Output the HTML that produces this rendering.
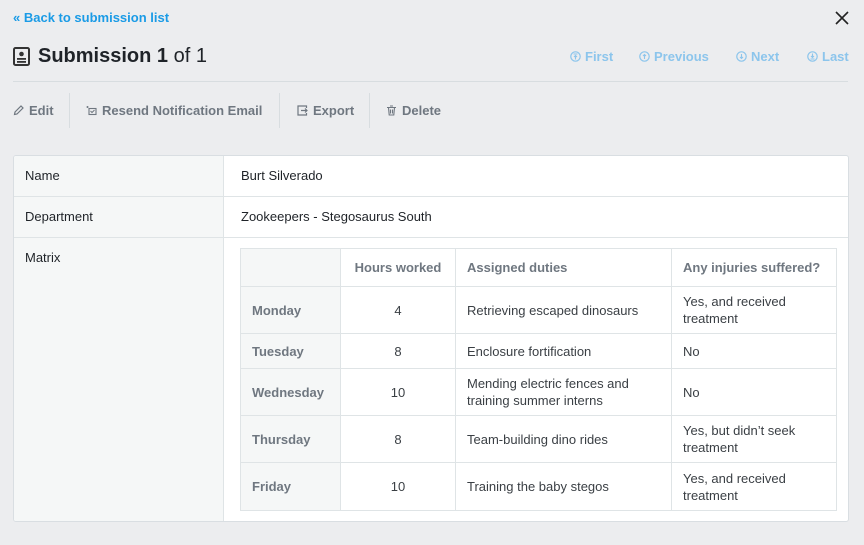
<!DOCTYPE html>
<html><head><style>
*{box-sizing:border-box;margin:0;padding:0}
body{width:864px;height:545px;background:#ecedef;font-family:"Liberation Sans",sans-serif;color:#1f2328;position:relative;overflow:hidden}
.a{position:absolute}
.back{left:13px;top:10px;color:#1a9be6;font-weight:bold;font-size:13px}
.title{left:13px;top:45px;font-size:20px;display:flex;align-items:center}
.title b{margin-left:8px}
.nav{top:49px;color:#8cc5ec;font-weight:bold;font-size:13px;display:flex;align-items:center}
.nav svg{margin-right:4px}
.hr{left:13px;top:81px;width:835px;height:1px;background:#d8dde0}
.tb{top:92px;height:36px;display:flex;align-items:center;color:#6f7780;font-weight:bold;font-size:13px}
.tb svg{margin-right:5px}
.sep{top:93px;width:1px;height:35px;background:#d8dde0}
.card{left:13px;top:155px;width:836px;height:367px;background:#fff;border:1px solid #d9dee2;border-radius:3px;overflow:hidden}
.lab{position:absolute;left:0;width:210px;background:#f5f7f7;border-right:1px solid #dfe4e6;border-bottom:1px solid #dfe4e6;font-size:13px;padding:12px 11px}
.row{position:absolute;left:0;width:836px;border-bottom:1px solid #dfe4e6}
.val{position:absolute;left:227px;font-size:13px}
table{position:absolute;left:226px;top:92px;width:597px;border-collapse:collapse;font-size:13px;color:#3a3f44}
td,th{border:1px solid #dfe4e6;padding:0 11px;text-align:left;line-height:17px}
th{color:#6f7780;font-weight:bold;height:38px}
td.d{background:#f5f7f7;color:#6f7780;font-weight:bold}
td.n{text-align:center}
</style></head><body>
<div class="a back">« Back to submission list</div>
<svg class="a" style="left:835px;top:11px" width="14" height="14" viewBox="0 0 14 14"><path d="M1 1L13 13M13 1L1 13" stroke="#222" stroke-width="1.6"/></svg>
<div class="a title"><svg width="17" height="19" viewBox="0 0 17 19"><rect x="1" y="1" width="15" height="17" rx="1.5" fill="none" stroke="#333" stroke-width="2"/><circle cx="8.5" cy="7" r="2.3" fill="#333"/><rect x="4" y="11" width="9" height="1.8" fill="#333"/><rect x="4" y="14" width="9" height="1.8" fill="#333"/></svg><b>Submission 1</b>&nbsp;of 1</div>
<div class="a nav" style="left:570px"><svg width="11" height="11" viewBox="0 0 11 11"><circle cx="5.5" cy="5.5" r="4.7" fill="none" stroke="#8cc5ec" stroke-width="1.2"/><path d="M3.5 3h4M5.5 8.5V4.5M4 6l1.5-1.5L7 6" fill="none" stroke="#8cc5ec" stroke-width="1.1"/></svg>First</div>
<div class="a nav" style="left:639px"><svg width="11" height="11" viewBox="0 0 11 11"><circle cx="5.5" cy="5.5" r="4.7" fill="none" stroke="#8cc5ec" stroke-width="1.2"/><path d="M5.5 8V3.5M4 5l1.5-1.5L7 5" fill="none" stroke="#8cc5ec" stroke-width="1.1"/></svg>Previous</div>
<div class="a nav" style="left:736px"><svg width="11" height="11" viewBox="0 0 11 11"><circle cx="5.5" cy="5.5" r="4.7" fill="none" stroke="#8cc5ec" stroke-width="1.2"/><path d="M5.5 3v4.5M4 6l1.5 1.5L7 6" fill="none" stroke="#8cc5ec" stroke-width="1.1"/></svg>Next</div>
<div class="a nav" style="left:807px"><svg width="11" height="11" viewBox="0 0 11 11"><circle cx="5.5" cy="5.5" r="4.7" fill="none" stroke="#8cc5ec" stroke-width="1.2"/><path d="M3.5 8h4M5.5 2.5v4M4 5l1.5 1.5L7 5" fill="none" stroke="#8cc5ec" stroke-width="1.1"/></svg>Last</div>
<div class="a hr"></div>
<div class="a tb" style="left:13px"><svg width="11" height="11" viewBox="0 0 11 11"><path d="M1.5 9.5l.5-2.5 6-6 2 2-6 6z" fill="none" stroke="#6f7780" stroke-width="1.2"/></svg>Edit</div>
<div class="a sep" style="left:69px"></div>
<div class="a tb" style="left:86px"><svg width="11" height="11" viewBox="0 0 11 11"><rect x="3" y="3.5" width="7" height="6" fill="none" stroke="#6f7780" stroke-width="1.1"/><path d="M4.5 6l1.5 1.5 2.5-2.5" fill="none" stroke="#6f7780" stroke-width="1"/><circle cx="1.5" cy="2" r="1" fill="#6f7780"/></svg>Resend Notification Email</div>
<div class="a sep" style="left:279px"></div>
<div class="a tb" style="left:297px"><svg width="11" height="11" viewBox="0 0 11 11"><path d="M9.5 3V1H1v9h8.5V8M4 5.5h6M8 3.5l2 2-2 2" fill="none" stroke="#6f7780" stroke-width="1.2"/></svg>Export</div>
<div class="a sep" style="left:369px"></div>
<div class="a tb" style="left:386px"><svg width="11" height="11" viewBox="0 0 11 11"><path d="M1 2.5h9M2.5 2.5l.7 7.5h4.6l.7-7.5M4 1h3M4.5 4.5v4M6.5 4.5v4" fill="none" stroke="#6f7780" stroke-width="1.1"/></svg>Delete</div>
<div class="a card">
<div class="row" style="top:0;height:41px"></div>
<div class="row" style="top:41px;height:41px"></div>
<div class="lab" style="top:0;height:41px">Name</div>
<div class="lab" style="top:41px;height:41px">Department</div>
<div class="lab" style="top:82px;height:290px;border-bottom:none">Matrix</div>
<div class="val" style="top:12px">Burt Silverado</div>
<div class="val" style="top:53px">Zookeepers - Stegosaurus South</div>
<table>
<tr><th style="width:100px;background:#f5f7f7"></th><th style="width:115px;text-align:center">Hours worked</th><th style="width:216px">Assigned duties</th><th>Any injuries suffered?</th></tr>
<tr style="height:47px"><td class="d">Monday</td><td class="n">4</td><td>Retrieving escaped dinosaurs</td><td>Yes, and received treatment</td></tr>
<tr style="height:35px"><td class="d">Tuesday</td><td class="n">8</td><td>Enclosure fortification</td><td>No</td></tr>
<tr style="height:47px"><td class="d">Wednesday</td><td class="n">10</td><td>Mending electric fences and training summer interns</td><td>No</td></tr>
<tr style="height:47px"><td class="d">Thursday</td><td class="n">8</td><td>Team-building dino rides</td><td>Yes, but didn’t seek treatment</td></tr>
<tr style="height:48px"><td class="d">Friday</td><td class="n">10</td><td>Training the baby stegos</td><td>Yes, and received treatment</td></tr>
</table>
</div>
</body></html>
